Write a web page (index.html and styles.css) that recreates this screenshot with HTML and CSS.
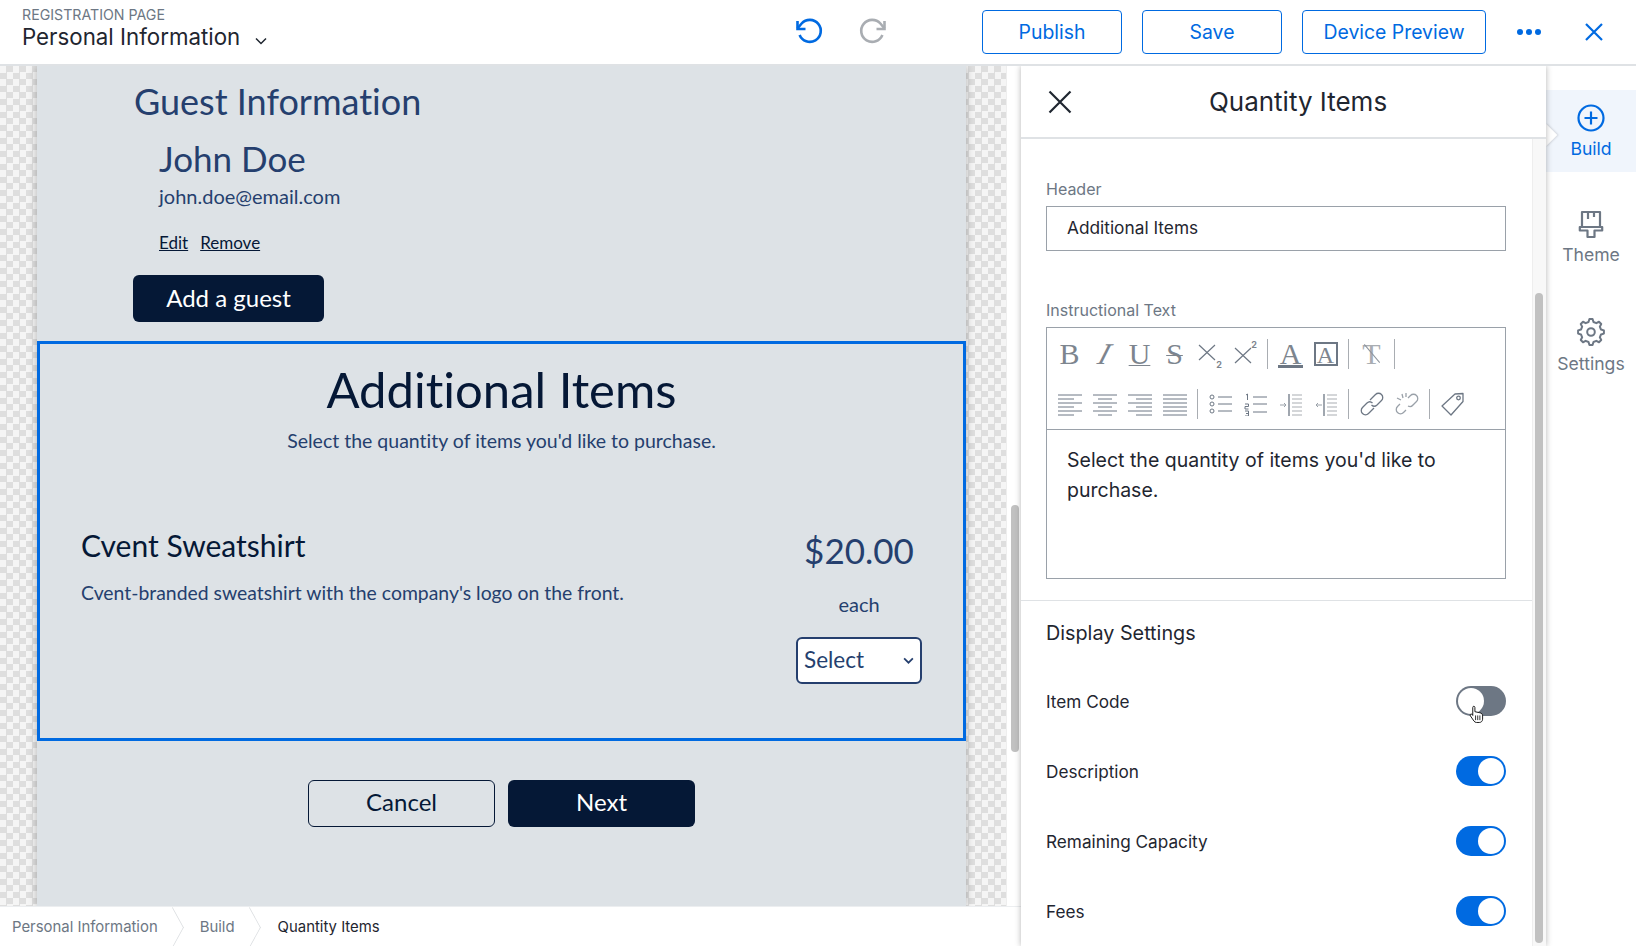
FILE: index.html
```html
<!DOCTYPE html>
<html lang="en">
<head>
    <meta charset="UTF-8">
    <meta name="viewport" content="width=device-width, initial-scale=1.0">
    <title>Personal Information</title>
    <link rel="stylesheet" href="styles.css">
</head>
<body>
    <header class="topbar">
        <div class="page-picker">
            <div class="eyebrow">REGISTRATION PAGE</div>
            <div class="page-name">Personal Information
                <svg class="page-caret" viewBox="0 0 12 8" width="12" height="8"><path d="M1 1.5 6 6.5 11 1.5" fill="none" stroke="#1f2630" stroke-width="1.5"/></svg>
            </div>
        </div>
        <div class="history">
            <svg viewBox="0 0 32 32" width="32" height="32" fill="none" stroke="#006ae1" stroke-width="2.6"><path d="M6.6 19a11 11 0 1 0 2-11.500L4.500 12.500"/><path d="M4.500 5v8h8"/></svg>
            <svg viewBox="0 0 32 32" width="32" height="32" fill="none" stroke="#a9adb2" stroke-width="2.6"><path d="M25.400 19a11 11 0 1 1-2-11.500l4.100 5"/><path d="M27.500 5v8h-8"/></svg>
        </div>
        <div class="actions">
            <button class="btn-outline btn-publish">Publish</button>
            <button class="btn-outline btn-publish">Save</button>
            <button class="btn-outline btn-device">Device Preview</button>
            <div class="more"><i></i><i></i><i></i></div>
            <svg class="close-top" viewBox="0 0 20 20" width="20" height="20" fill="none" stroke="#006ae1" stroke-width="2.2"><path d="M2 2 18 18M18 2 2 18"/></svg>
        </div>
    </header>

    <div class="workspace">
        <div class="canvas-col">
            <div class="canvas">
                <div class="page">
                    <section class="guests">
                        <h2>Guest Information</h2>
                        <div class="guest">
                            <div class="guest-name">John Doe</div>
                            <div class="guest-mail">john.doe@email.com</div>
                            <div class="guest-links"><a>Edit</a><a>Remove</a></div>
                        </div>
                        <button class="btn-dark btn-add">Add a guest</button>
                    </section>

                    <section class="items">
                        <h1>Additional Items</h1>
                        <p class="items-sub">Select the quantity of items you'd like to purchase.</p>
                        <div class="item">
                            <div class="item-info">
                                <h3>Cvent Sweatshirt</h3>
                                <p>Cvent-branded sweatshirt with the company's logo on the front.</p>
                            </div>
                            <div class="item-buy">
                                <div class="price">$20.00</div>
                                <div class="each">each</div>
                                <div class="select">Select
                                    <svg viewBox="0 0 12 8" width="11" height="7"><path d="M1 1.500 6 6.500 11 1.500" fill="none" stroke="#253f6e" stroke-width="2"/></svg>
                                </div>
                            </div>
                        </div>
                    </section>

                    <div class="nav-buttons">
                        <button class="btn-cancel">Cancel</button>
                        <button class="btn-dark btn-next">Next</button>
                    </div>
                </div>
                <div class="canvas-gutter"><div class="canvas-thumb"></div></div>
            </div>
            <nav class="crumbs">
                <span class="crumb crumb-first">Personal Information</span>
                <span class="crumb crumb-build">Build</span>
                <span class="crumb-current">Quantity Items</span>
            </nav>
        </div>

        <aside class="panel">
            <div class="panel-head">
                <svg class="panel-close" viewBox="0 0 24 24" width="24" height="24" fill="none" stroke="#1f2630" stroke-width="2.2"><path d="M1.500 1.500 22.500 22.500M22.500 1.500 1.500 22.500"/></svg>
                <div class="panel-title">Quantity Items</div>
            </div>
            <div class="panel-scroll">
                <div class="panel-body">
                    <div class="form-top">
                        <label class="field-label">Header</label>
                        <div class="text-input">Additional Items</div>
                        <label class="field-label label-gap">Instructional Text</label>
                        <div class="editor">
                            <div class="toolbar">
                                <div class="tool-row">
                                    <span class="tool glyph">B</span>
                                    <span class="tool glyph glyph-italic">I</span>
                                    <span class="tool glyph glyph-under">U</span>
                                    <span class="tool glyph glyph-strike">S</span>
                                    <span class="tool"><svg viewBox="0 0 26 24" width="26" height="24" fill="none" stroke="#6d7784" stroke-width="1.200"><path d="M2 3 18 18M18 3 2 18"/></svg><small class="script-sub">2</small></span>
                                    <span class="tool"><svg viewBox="0 0 26 24" width="26" height="24" fill="none" stroke="#6d7784" stroke-width="1.200"><path d="M3 6 19 21M19 6 3 21"/></svg><small class="script-sup">2</small></span>
                                    <i class="tool-sep"></i>
                                    <span class="tool glyph glyph-bar">A</span>
                                    <span class="tool"><span class="glyph-box">A</span></span>
                                    <i class="tool-sep"></i>
                                    <span class="tool glyph glyph-clear">T</span>
                                    <i class="tool-sep"></i>
                                </div>
                                <div class="tool-row">
                                    <span class="tool"><svg viewBox="0 0 26 24" width="26" height="24" stroke="#6d7784"><path d="M1 3H25M1 7H17M1 11H25M1 15H17M1 19H25M1 23H17"/></svg></span>
                                    <span class="tool"><svg viewBox="0 0 26 24" width="26" height="24" stroke="#6d7784"><path d="M1 3H25M6 7H20M1 11H25M6 15H20M1 19H25M6 23H20"/></svg></span>
                                    <span class="tool"><svg viewBox="0 0 26 24" width="26" height="24" stroke="#6d7784"><path d="M1 3H25M9 7H25M1 11H25M9 15H25M1 19H25M9 23H25"/></svg></span>
                                    <span class="tool"><svg viewBox="0 0 26 24" width="26" height="24" stroke="#6d7784"><path d="M1 3H25M1 7H25M1 11H25M1 15H25M1 19H25M1 23H25"/></svg></span>
                                    <i class="tool-sep"></i>
                                    <span class="tool"><svg viewBox="0 0 26 24" width="26" height="24" fill="none" stroke="#6d7784"><circle cx="4" cy="5" r="2"/><circle cx="4" cy="12" r="2"/><circle cx="4" cy="19" r="2"/><path d="M10 5H24M10 12H24M10 19H24"/></svg></span>
                                    <span class="tool"><svg viewBox="0 0 26 24" width="26" height="24" fill="none" stroke="#6d7784"><path d="M3 3 4.500 2V8M2 12H5.500V14.500H2V17H5.500M2 19H5.500V24H2M3 21.500H5.500M10 5H24M10 12H24M10 20H24"/></svg></span>
                                    <span class="tool"><svg viewBox="0 0 26 24" width="26" height="24" fill="none" stroke="#6d7784"><path d="M2 13H8M6 11 8 13 6 15" stroke="#9aa1a9"/><path d="M11 2V24" stroke-width="1.300"/><path d="M14 3H24M14 7H24M14 11H24M14 15H24M14 19H24M14 23H24" stroke="#a9adb2"/></svg></span>
                                    <span class="tool"><svg viewBox="0 0 26 24" width="26" height="24" fill="none" stroke="#6d7784"><path d="M9 13H3M5 11 3 13 5 15" stroke="#9aa1a9"/><path d="M11 2V24" stroke-width="1.300"/><path d="M14 3H24M14 7H24M14 11H24M14 15H24M14 19H24M14 23H24" stroke="#a9adb2"/></svg></span>
                                    <i class="tool-sep"></i>
                                    <span class="tool"><svg viewBox="0 0 26 26" width="26" height="26" fill="none" stroke="#6d7784" stroke-width="1.300"><path d="M11 9 16.500 3.500A4 4 0 0 1 22.500 9.500L18 14A4 4 0 0 1 12.500 14"/><path d="M15 17 9.500 22.500A4 4 0 0 1 3.500 16.500L8 12A4 4 0 0 1 13.500 12"/></svg></span>
                                    <span class="tool"><svg viewBox="0 0 26 26" width="26" height="26" fill="none" stroke="#9aa1a9" stroke-width="1.300"><path d="M14 7 16.500 4.500A4 4 0 0 1 22.500 10.500L19 14A4 4 0 0 1 14 15"/><path d="M12 19 9.500 21.500A4 4 0 0 1 3.500 15.500L6 13"/><path d="M8 3 9 7M3 7 7 9M12 2V6"/></svg></span>
                                    <i class="tool-sep"></i>
                                    <span class="tool"><svg viewBox="0 0 26 26" width="26" height="26" fill="none" stroke="#6d7784" stroke-width="1.300"><path d="M2 15 15 3 23 2.500 23 10.500 11 24Z" stroke-linejoin="round"/><circle cx="18.500" cy="7" r="1.800"/></svg></span>
                                </div>
                            </div>
                            <div class="editor-text">Select the quantity of items you'd like to purchase.</div>
                        </div>
                    </div>
                    <div class="display-settings">
                        <h4>Display Settings</h4>
                        <div class="setting">Item Code
                            <span class="toggle toggle-off"><i></i>
                                <svg class="hand" viewBox="0 0 16 20" width="15" height="19"><path d="M4 2.500C4 .8 6.300.8 6.300 2.500V7L11 8C13.500 8.500 14.500 9.500 14.500 11.500V15C14.500 17 13 18.500 11 18.500H8C6.800 18.500 6 18 5.300 17L1.500 11.500C.5 10 2.300 8.800 3.300 10L4 11Z" fill="#fff" stroke="#111" stroke-width="1"/><path d="M7 11V16M9.300 11V16M11.600 11V16" stroke="#111" stroke-width=".9"/></svg>
                            </span>
                        </div>
                        <div class="setting">Description <span class="toggle"><i></i></span></div>
                        <div class="setting">Remaining Capacity <span class="toggle"><i></i></span></div>
                        <div class="setting">Fees <span class="toggle"><i></i></span></div>
                    </div>
                </div>
                <div class="panel-gutter"><div class="panel-thumb"></div></div>
            </div>
        </aside>

        <nav class="rail">
            <div class="rail-item rail-active">
                <svg viewBox="0 0 30 30" width="30" height="30" fill="none" stroke="#006ae1" stroke-width="2.200"><circle cx="15" cy="15" r="12.500"/><path d="M15 8.500V21.500M8.500 15H21.500"/></svg>
                <span>Build</span>
            </div>
            <div class="rail-item">
                <svg viewBox="0 0 30 30" width="30" height="30" fill="none" stroke="#6d7784" stroke-width="2.200" stroke-linejoin="round"><path d="M6 3H24V18H6ZM12 3V10M18 3V8M3.800 18H26.200V21.500H18.500V28H11.500V21.500H3.800Z"/></svg>
                <span>Theme</span>
            </div>
            <div class="rail-item">
                <svg viewBox="-16 -16 32 32" width="32" height="32" fill="none" stroke="#6d7784" stroke-width="2" stroke-linejoin="round"><polygon points="10,-2.490 12.900,-1.580 12.900,1.580 10,2.490 8.830,5.300 10.240,8 8,10.240 5.300,8.830 2.490,10 1.580,12.900 -1.580,12.900 -2.490,10 -5.300,8.830 -8,10.240 -10.240,8 -8.830,5.300 -10,2.490 -12.900,1.580 -12.900,-1.580 -10,-2.490 -8.830,-5.300 -10.240,-8 -8,-10.240 -5.300,-8.830 -2.490,-10 -1.580,-12.900 1.580,-12.900 2.490,-10 5.300,-8.830 8,-10.240 10.240,-8 8.830,-5.300"/><circle r="3.800"/></svg>
                <span>Settings</span>
            </div>
        </nav>
    </div>
</body>
</html>
```

FILE: styles.css
```css
* {
    box-sizing: border-box;
}

body {
    margin: 0;
    width: 1636px;
    height: 946px;
    overflow: hidden;
    background-color: #fff;
    font-family: Inter, Roboto, sans-serif;
    color: #1f2630;
}

h1, h2, h3, h4, p {
    margin: 0;
    font-weight: 400;
}

button {
    font-family: inherit;
    cursor: pointer;
}

/* top bar */
.topbar {
    height: 66px;
    display: flex;
    align-items: center;
    border-bottom: 2px solid #dfe2e5;
    padding: 0 32px 0 22px;
    position: relative;
    z-index: 3;
    background: #fff;
}

.page-picker {
    width: 760px;
    margin-top: -7px;
}

.eyebrow {
    font-size: 14.200px;
    line-height: 16px;
    color: #6d7784;
}

.page-name {
    font-size: 22.300px;
    line-height: 28px;
}

.page-caret {
    margin-left: 9px;
}

.history {
    display: flex;
    gap: 32px;
    margin-left: 11px;
    margin-top: -1px;
}

.actions {
    display: flex;
    align-items: center;
    margin-left: auto;
}

.btn-outline {
    height: 44px;
    margin-right: 20px;
    border: 1px solid #006ae1;
    border-radius: 4px;
    background: #fff;
    color: #006ae1;
    font-size: 19.400px;
}

.btn-publish {
    width: 140px;
}

.btn-device {
    width: 184px;
    margin-right: 31px;
}

.more {
    display: flex;
    gap: 3px;
    margin-right: 43px;
}

.more i {
    width: 6px;
    height: 6px;
    border-radius: 50%;
    background: #006ae1;
}

/* main area */
.workspace {
    display: flex;
    height: 880px;
}

.canvas-col {
    width: 1021px;
    display: flex;
    flex-direction: column;
}

.canvas {
    height: 840px;
    display: flex;
    overflow: hidden;
    background-color: #fff;
    background-image: conic-gradient(#dedede 25%, #f5f5f5 0 50%, #dedede 0 75%, #f5f5f5 0);
    background-size: 13px 13px;
}

.page {
    width: 929px;
    height: 840px;
    margin-left: 37px;
    background: #dde2e6;
    box-shadow: 0 0 8px rgba(0, 0, 0, 0.28);
    font-family: Lato, "Noto Sans", sans-serif;
    font-variant-ligatures: none;
    color: #253f6e;
}

.canvas-gutter {
    width: 15px;
    margin-left: 40px;
    flex: none;
    background: #fff;
    border-left: 1px solid #eee;
}

.canvas-thumb {
    width: 8px;
    height: 247px;
    margin: 439px 0 0 4px;
    border-radius: 4px;
    background: #c1c1c1;
}

.guests {
    height: 275px;
    padding: 14px 0 0 97px;
}

.guests h2 {
    font-size: 36px;
    line-height: 42px;
}

.guest {
    padding-left: 25px;
    margin-top: 14px;
}

.guest-name {
    font-size: 35px;
    line-height: 44px;
}

.guest-mail {
    font-size: 20px;
    line-height: 24px;
    margin-top: 4px;
}

.guest-links {
    display: flex;
    gap: 12px;
    font-size: 17px;
    line-height: 22px;
    margin-top: 24px;
    color: #051836;
}

.guest-links a {
    text-decoration: underline;
}

.btn-dark {
    border: none;
    border-radius: 6px;
    background: #051836;
    color: #fff;
    font-family: inherit;
}

.btn-add {
    display: block;
    width: 191px;
    height: 47px;
    margin: 21px 0 0 -1px;
    padding-bottom: 3px;
    font-size: 24px;
}

.items {
    height: 400px;
    border: 3px solid #006ae1;
    padding: 15px 41px 0;
}

.items h1 {
    text-align: center;
    font-size: 49px;
    line-height: 60px;
    color: #051836;
}

.items-sub {
    text-align: center;
    font-size: 19.500px;
    line-height: 26px;
    margin-top: 9px;
}

.item {
    display: flex;
    justify-content: space-between;
    margin-top: 72px;
}

.item-info h3 {
    font-size: 30px;
    line-height: 38px;
    color: #051836;
}

.item-info p {
    font-size: 19.400px;
    line-height: 26px;
    margin-top: 16px;
}

.item-buy {
    width: 126px;
    margin-top: 2px;
    text-align: center;
}

.price {
    font-size: 35px;
    line-height: 44px;
}

.each {
    font-size: 20px;
    line-height: 24px;
    margin-top: 20px;
}

.select {
    height: 47px;
    margin-top: 21px;
    display: flex;
    align-items: center;
    justify-content: space-between;
    padding: 0 6px 3px 6px;
    border: 2px solid #253f6e;
    border-radius: 6px;
    background: #fff;
    font-size: 22.500px;
}

.select svg {
    margin-top: 3px;
}

.nav-buttons {
    display: flex;
    justify-content: center;
    gap: 13px;
    margin-top: 39px;
}

.nav-buttons button {
    width: 187px;
    height: 47px;
    padding-bottom: 6px;
    font-size: 24px;
    font-family: inherit;
}

.btn-cancel {
    border: 1px solid #051836;
    border-radius: 6px;
    background: transparent;
    color: #051836;
}

/* breadcrumbs */
.crumbs {
    height: 40px;
    display: flex;
    align-items: center;
    font-size: 14.900px;
    background: #fff;
    color: #6d7784;
    border-top: 1px solid #eceef0;
}

.crumb {
    position: relative;
}

.crumb::after {
    content: "";
    position: absolute;
    top: -5px;
    right: -29px;
    width: 28px;
    height: 28px;
    border-top: 1px solid #d8dbde;
    border-right: 1px solid #d8dbde;
    transform: scaleX(.55) rotate(45deg);
}

.crumb-first {
    margin-left: 12px;
}

.crumb-build {
    margin-left: 42px;
}

.crumb-current {
    margin-left: 43px;
    color: #1f2630;
}

/* side panel */
.panel {
    width: 525px;
    position: relative;
    z-index: 2;
    background: #fff;
    box-shadow: 0 0 6px rgba(0, 0, 0, 0.3);
    display: flex;
    flex-direction: column;
    overflow: hidden;
}

.panel-head {
    height: 73px;
    flex: none;
    border-bottom: 2px solid #dfe2e5;
    display: flex;
    align-items: center;
    padding-left: 27px;
}

.panel-title {
    width: 452px;
    text-align: center;
    font-size: 26px;
}

.panel-scroll {
    flex: 1;
    display: flex;
    min-height: 0;
}

.panel-body {
    width: 511px;
    flex: none;
}

.panel-gutter {
    width: 14px;
    background: #f8f8f8;
    border-left: 1px solid #eee;
}

.panel-thumb {
    width: 8px;
    height: 650px;
    margin: 154px 0 0 2px;
    border-radius: 4px;
    background: #c1c1c1;
}

.form-top {
    padding: 40px 26px 0 25px;
    height: 462px;
    border-bottom: 1px solid #dfe2e5;
}

.field-label {
    display: block;
    font-size: 16px;
    line-height: 20px;
    color: #6d7784;
}

.label-gap {
    margin-top: 49px;
}

.text-input {
    height: 45px;
    margin-top: 7px;
    padding-left: 20px;
    border: 1px solid #9aa1a9;
    font-size: 17.300px;
    line-height: 41px;
}

.editor {
    height: 252px;
    margin-top: 7px;
    border: 1px solid #9aa1a9;
}

.toolbar {
    height: 102px;
    padding: 1px 0 0 5px;
    border-bottom: 1px solid #9aa1a9;
}

.tool-row {
    display: flex;
    align-items: center;
    height: 50px;
}

.tool {
    position: relative;
    width: 35px;
    height: 32px;
    display: flex;
    align-items: center;
    justify-content: center;
    color: #7d858e;
}

.tool-sep {
    width: 1px;
    height: 30px;
    margin: 0 5px;
    background: #a9adb2;
}

.glyph {
    font-family: "Liberation Serif", serif;
    font-size: 30px;
}

.glyph-italic {
    font-style: italic;
    transform: skewX(-18deg);
}

.glyph-under {
    text-decoration: underline;
    text-decoration-thickness: 1px;
}

.glyph-strike {
    text-decoration: line-through;
    text-decoration-thickness: 1px;
}

.glyph-bar {
    align-items: flex-start;
    line-height: 28px;
    border-bottom: 3px solid #6d7784;
    width: 25px;
    margin: 0 5px;
    height: 28px;
}

.glyph-box {
    width: 24px;
    height: 24px;
    border: 2px solid #6d7784;
    font-family: "Liberation Serif", serif;
    font-size: 24px;
    line-height: 22px;
    text-align: center;
}

.glyph-clear {
    color: #a9adb2;
}

/* the slash through the clear-format T */
.glyph-clear::after {
    content: "";
    position: absolute;
    left: 6px;
    top: 15px;
    width: 24px;
    height: 1px;
    background: #8d949c;
    transform: rotate(50deg);
}

.script-sub,
.script-sup {
    position: absolute;
    font-size: 9px;
    font-weight: 700;
    right: 5px;
}

.script-sub {
    bottom: 0;
}

.script-sup {
    top: 1px;
}

.editor-text {
    padding: 15px 20px;
    font-size: 19.500px;
    line-height: 30px;
}

.display-settings {
    padding: 19px 25px 0;
}

.display-settings h4 {
    font-size: 19.800px;
    line-height: 26px;
}

.setting {
    height: 30px;
    margin-top: 40px;
    display: flex;
    align-items: center;
    justify-content: space-between;
    padding-right: 1px;
    font-size: 17.200px;
}

.toggle {
    position: relative;
    width: 50px;
    height: 30px;
    border-radius: 15px;
    background: #006ae1;
}

.toggle i {
    position: absolute;
    top: 2px;
    right: 2px;
    width: 26px;
    height: 26px;
    border-radius: 50%;
    background: #fff;
}

.toggle-off {
    background: #6d7784;
}

.toggle-off i {
    right: auto;
    left: 2px;
}

.hand {
    position: absolute;
    left: 13px;
    top: 19px;
}

/* right rail */
.rail {
    width: 90px;
    padding-top: 24px;
    position: relative;
}

.rail-item {
    height: 107px;
    display: flex;
    flex-direction: column;
    align-items: center;
    padding-top: 13px;
    gap: 4px;
    font-size: 17.600px;
    line-height: 24px;
    color: #6d7784;
}

.rail-active {
    height: 82px;
    margin-bottom: 24px;
    background: #f0f5fc;
    color: #006ae1;
    position: relative;
}

.rail-active::before {
    content: "";
    position: absolute;
    left: -8px;
    top: 37px;
    width: 16px;
    height: 16px;
    background: #fff;
    transform: rotate(45deg);
    box-shadow: 1px -1px 2px rgba(0, 0, 0, 0.12);
}
```
